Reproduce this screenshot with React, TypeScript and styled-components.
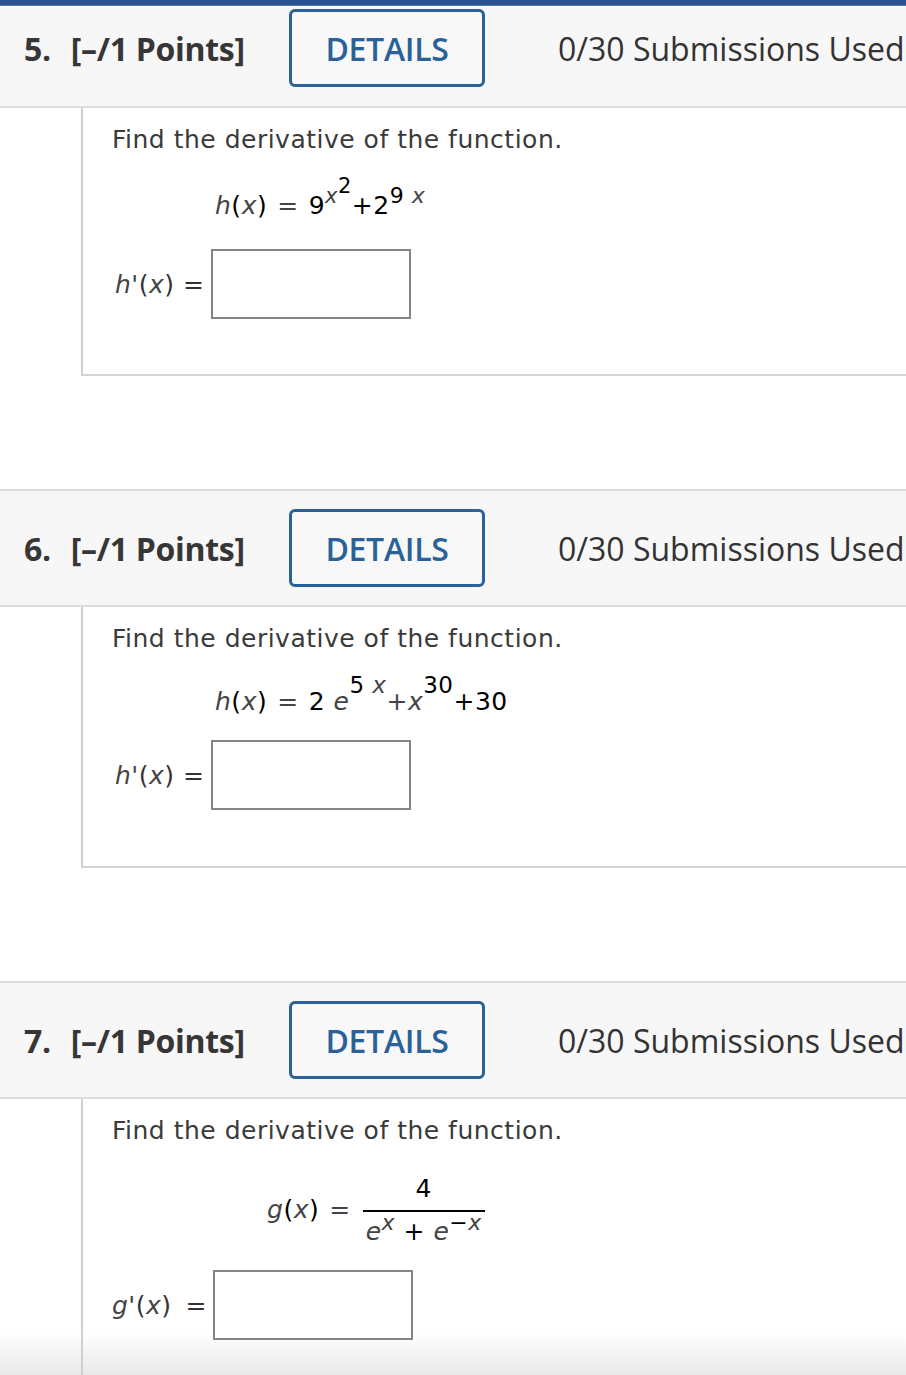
import React from 'react';
import styled, { createGlobalStyle } from 'styled-components';

const GlobalStyle = createGlobalStyle`
  html, body {
    margin: 0;
    padding: 0;
    background: #fff;
  }
  * {
    box-sizing: border-box;
  }
`;

const Page = styled.div`
  width: 906px;
  height: 1375px;
  overflow: hidden;
  background: linear-gradient(to bottom, #fff 1332px, #e9e9e9 1375px);
`;

const TopBar = styled.div`
  height: 6px;
  background: #2b5191;
  border-bottom: 1px solid #4d77b3;
`;

const Question = styled.section<{ $gap?: number }>`
  margin-top: ${(p) => p.$gap ?? 0}px;
`;

const Header = styled.div<{ $first?: boolean }>`
  display: flex;
  align-items: center;
  background: #f7f7f7;
  border-top: ${(p) => (p.$first ? 'none' : '2px solid #dcdcdc')};
  border-bottom: 2px solid #dcdcdc;
  padding: ${(p) => (p.$first ? '3px 0 19px' : '18px 0 18px')} 24px;
  white-space: nowrap;
  font-family: 'Open Sans', 'Noto Sans', sans-serif;
  color: #363636;
`;

const Points = styled.span`
  width: 265px;
  font-size: 32px;
  font-weight: 700;
  letter-spacing: -0.3px;
`;

const Num = styled.span`
  margin-right: 20px;
`;

const DetailsButton = styled.button`
  width: 196px;
  height: 78px;
  background: #f8f8f8;
  border: 3px solid #2a6198;
  border-radius: 6px;
  color: #2a6198;
  font-family: 'Open Sans', 'Noto Sans', sans-serif;
  font-size: 32px;
  font-weight: 600;
  letter-spacing: -0.3px;
  padding: 0;
  cursor: pointer;
`;

const Submissions = styled.span`
  margin-left: 73px;
  font-size: 32px;
  font-weight: 400;
  color: #333;
`;

const Body = styled.div<{ $height: number; $open?: boolean }>`
  margin-left: 81px;
  border-left: 2px solid #cfcfcf;
  border-bottom: ${(p) => (p.$open ? 'none' : '2px solid #d4d4d4')};
  height: ${(p) => p.$height}px;
  padding: 17px 0 0 29px;
  font-family: 'DejaVu Sans', Verdana, sans-serif;
  font-size: 25px;
  letter-spacing: 0.5px;
  color: #333;
`;

const Prompt = styled.p`
  margin: 0;
  line-height: 30px;
  color: #3a3a3a;
`;

const Formula = styled.div<{ $indent: number; $top: number }>`
  margin: ${(p) => p.$top}px 0 0 ${(p) => p.$indent}px;
  line-height: 30px;
  color: #000;
  white-space: nowrap;
`;

const Var = styled.i`
  font-style: italic;
  color: #444;
`;

const Op = styled.span<{ $space?: boolean }>`
  color: #444;
  margin: 0 ${(p) => (p.$space ? '10px' : '0')};
`;

const Sup = styled.span<{ $raise: number; $size: number }>`
  font-size: ${(p) => p.$size}px;
  line-height: 0;
  vertical-align: ${(p) => p.$raise}px;
`;

const Fraction = styled.span`
  display: inline-flex;
  flex-direction: column;
  align-items: center;
  vertical-align: middle;
  margin-left: 2px;
`;

const Numerator = styled.span`
  padding: 0 4px 6px;
  line-height: 30px;
`;

const Denominator = styled.span`
  border-top: 2px solid #000;
  padding: 5px 3px 0;
  line-height: 30px;
`;

const AnswerRow = styled.div<{ $top: number; $labelWidth: number }>`
  display: flex;
  align-items: center;
  margin-top: ${(p) => p.$top}px;
  color: #333;

  & > label {
    width: ${(p) => p.$labelWidth}px;
    padding-left: 3px;
    white-space: nowrap;
  }
`;

const Eq = styled.span<{ $left: number }>`
  margin-left: ${(p) => p.$left}px;
`;

const AnswerInput = styled.input`
  width: 200px;
  height: 70px;
  border: 2px solid #858585;
  background: #fff;
  font-size: 20px;
  padding: 0 8px;
  outline: none;
`;

type QProps = {
  num: number;
  first?: boolean;
  gap?: number;
  height: number;
  open?: boolean;
  children: React.ReactNode;
};

const QuestionBlock: React.FC<QProps> = ({ num, first, gap, height, open, children }) => (
  <Question $gap={gap}>
    <Header $first={first}>
      <Points>
        <Num>{num}.</Num>[–/1 Points]
      </Points>
      <DetailsButton>DETAILS</DetailsButton>
      <Submissions>0/30 Submissions Used</Submissions>
    </Header>
    <Body $height={height} $open={open}>
      <Prompt>Find the derivative of the function.</Prompt>
      {children}
    </Body>
  </Question>
);

const App: React.FC = () => (
  <Page>
    <GlobalStyle />
    <TopBar />

    <QuestionBlock num={5} first height={268}>
      <Formula $indent={103} $top={31}>
        <Var>h</Var>(<Var>x</Var>)<Op $space>=</Op>9
        <Sup $raise={11} $size={21}>
          <Var>x</Var>
          <Sup $raise={10} $size={21}>2</Sup>
        </Sup>
        +2
        <Sup $raise={11} $size={22}>
          9 <Var>x</Var>
        </Sup>
      </Formula>
      <AnswerRow $top={28} $labelWidth={99}>
        <label>
          <Var>h'</Var>(<Var>x</Var>) =
        </label>
        <AnswerInput aria-label="h prime of x" />
      </AnswerRow>
    </QuestionBlock>

    <QuestionBlock num={6} gap={113} height={261}>
      <Formula $indent={103} $top={31}>
        <Var>h</Var>(<Var>x</Var>)<Op $space>=</Op>2&nbsp;<Var>e</Var>
        <Sup $raise={17} $size={23}>
          5 <Var>x</Var>
        </Sup>
        <Op>+</Op>
        <Var>x</Var>
        <Sup $raise={17} $size={23}>30</Sup>+30
      </Formula>
      <AnswerRow $top={23} $labelWidth={99}>
        <label>
          <Var>h'</Var>(<Var>x</Var>) =
        </label>
        <AnswerInput aria-label="h prime of x" />
      </AnswerRow>
    </QuestionBlock>

    <QuestionBlock num={7} gap={113} height={300} open>
      <Formula $indent={155} $top={28}>
        <Var>g</Var>(<Var>x</Var>)<Op $space>=</Op>
        <Fraction>
          <Numerator>4</Numerator>
          <Denominator>
            <Var>e</Var>
            <Sup $raise={10} $size={22}>
              <Var>x</Var>
            </Sup>
            &nbsp;+&nbsp;<Var>e</Var>
            <Sup $raise={10} $size={22}>
              −<Var>x</Var>
            </Sup>
          </Denominator>
        </Fraction>
      </Formula>
      <AnswerRow $top={23} $labelWidth={101}>
        <label style={{ paddingLeft: 0 }}>
          <Var>g'</Var>(<Var>x</Var>)<Eq $left={14}>=</Eq>
        </label>
        <AnswerInput aria-label="g prime of x" />
      </AnswerRow>
    </QuestionBlock>
  </Page>
);

export default App;
